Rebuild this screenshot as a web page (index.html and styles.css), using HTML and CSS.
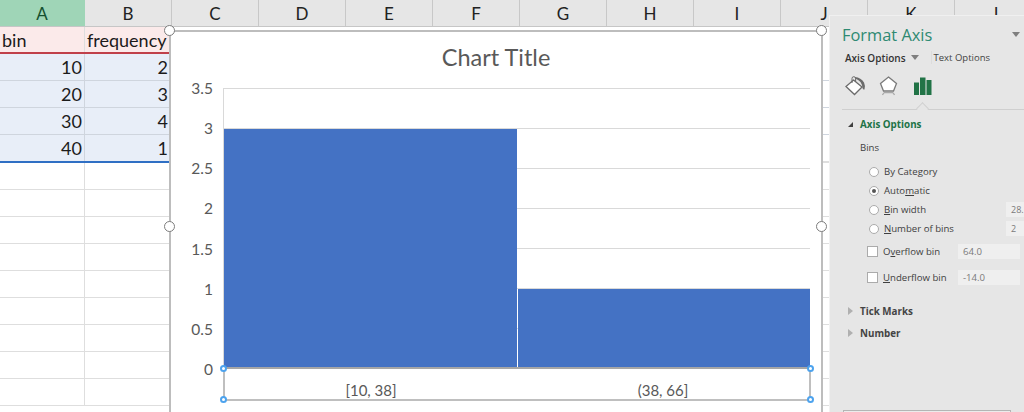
FILE: index.html
```html
<!DOCTYPE html>
<html lang="en">
<head>
<meta charset="utf-8">
<title>Format Axis</title>
<link rel="stylesheet" href="styles.css">
</head>
<body>
<div class="app">
  <div class="sheet">
    <div class="col-heads">
      <div class="ch active">A</div><div class="ch">B</div><div class="ch">C</div><div class="ch">D</div><div class="ch">E</div><div class="ch">F</div><div class="ch">G</div><div class="ch">H</div><div class="ch">I</div><div class="ch">J</div><div class="ch">K</div><div class="ch">L</div>
    </div>
    <div class="row head"><div class="cell">bin</div><div class="cell">frequency</div></div>
    <div class="row data"><div class="cell num">10</div><div class="cell num">2</div></div>
    <div class="row data"><div class="cell num">20</div><div class="cell num">3</div></div>
    <div class="row data"><div class="cell num">30</div><div class="cell num">4</div></div>
    <div class="row data last"><div class="cell num">40</div><div class="cell num">1</div></div>
    <div class="row"><div class="cell"></div><div class="cell"></div></div>
    <div class="row"><div class="cell"></div><div class="cell"></div></div>
    <div class="row"><div class="cell"></div><div class="cell"></div></div>
    <div class="row"><div class="cell"></div><div class="cell"></div></div>
    <div class="row"><div class="cell"></div><div class="cell"></div></div>
    <div class="row"><div class="cell"></div><div class="cell"></div></div>
    <div class="row"><div class="cell"></div><div class="cell"></div></div>
    <div class="row"><div class="cell"></div><div class="cell"></div></div>
    <div class="row"><div class="cell"></div><div class="cell"></div></div>
  </div>

  <div class="chart">
    <span class="handle h-tl"></span><span class="handle h-tr"></span><span class="handle h-ml"></span><span class="handle h-mr"></span>
    <div class="chart-title">Chart Title</div>
    <div class="plot-wrap">
      <div class="y-axis"><span>3.5</span><span>3</span><span>2.5</span><span>2</span><span>1.5</span><span>1</span><span>0.5</span><span>0</span></div>
      <div class="plot">
        <div class="bar bar-a"></div>
        <div class="bar bar-b"></div>
      </div>
    </div>
    <div class="x-axis">
      <span>[10, 38]</span><span>(38, 66]</span>
      <i class="dot d1"></i><i class="dot d2"></i><i class="dot d3"></i><i class="dot d4"></i>
    </div>
  </div>

  <aside class="panel">
    <div class="panel-head"><span class="panel-title">Format Axis</span><span class="caret-down big"></span></div>
    <div class="tabs"><b>Axis Options</b><span class="caret-down"></span><span class="tab-sep"></span><span class="tab-text">Text Options</span></div>
    <div class="icons">
      <svg width="22" height="22" viewBox="0 0 22 22"><path d="M9.500 6 L18 13 L10.500 20.500 L2 12.500 Z" fill="#fff" stroke="#6b6b6b" stroke-width="1.300"/><path d="M8 9 V4.500 a1.800 1.800 0 0 1 3.600 0 V8" fill="none" stroke="#6b6b6b"/><path d="M11 3 q6 0.500 9 5.500 q1.500 3 0.500 7 q-1.500 0.500 -2 -1.500 q0 -3 -2 -6 q-2 -2.500 -5.500 -3.500z" fill="#6b6b6b"/></svg>
      <svg width="22" height="22" viewBox="0 0 22 22"><path d="M11.500 3 L19.500 9.500 L16.500 17 H6.500 L3.500 9.500 Z" fill="#fff" stroke="#7a7a7a" stroke-width="1.300"/><path d="M5.500 21 q1 -2 2 -2.500 h8 q1 0.500 2 2.500" fill="none" stroke="#a8a8a8" stroke-width="1.300"/></svg>
      <svg width="22" height="22" viewBox="0 0 22 22"><path d="M4 8.500h5V21H4zM10 3.500h5.500V21H10zM16.500 6h5v15h-5z" fill="#217346"/></svg>
    </div>
    <div class="tab-rule"><span class="notch"></span></div>
    <div class="section-head open"><span class="tri-open"></span><b>Axis Options</b></div>
    <div class="bins-label">Bins</div>
    <div class="opt"><span class="radio"></span><span>By Category</span></div>
    <div class="opt"><span class="radio on"></span><span>Auto<u>m</u>atic</span></div>
    <div class="opt"><span class="radio"></span><span class="opt-label"><u>B</u>in width</span><span class="field narrow">28.</span></div>
    <div class="opt"><span class="radio"></span><span class="opt-label"><u>N</u>umber of bins</span><span class="field narrow">2</span></div>
    <div class="opt check"><span class="box"></span><span class="opt-label short">O<u>v</u>erflow bin</span><span class="field">64.0</span></div>
    <div class="opt check"><span class="box"></span><span class="opt-label short"><u>U</u>nderflow bin</span><span class="field">-14.0</span></div>
    <div class="section-head closed first"><span class="tri-closed"></span><b>Tick Marks</b></div>
    <div class="section-head closed"><span class="tri-closed"></span><b>Number</b></div>
    <div class="scrollbar"></div>
  </aside>
</div>
</body>
</html>
```
FILE: styles.css
```css
* { box-sizing: border-box; }
html, body { margin: 0; height: 100%; overflow: hidden; background: #fff; }
.app { position: relative; width: 1024px; height: 412px; overflow: hidden; font-family: "Lato", "Open Sans", sans-serif; }

.sheet { display: flex; flex-direction: column; }
.col-heads { display: grid; grid-template-columns: 85px repeat(11, 87px); height: 27px; flex: none; background: #e6e6e6; border-bottom: 1px solid #c6c6c6; }
.ch { display: flex; align-items: center; justify-content: center; font-size: 17px; color: #222; border-right: 1px solid #c8c8c8; }
.ch.active { background: #9fd5b7; color: #14502f; border-right-color: #9fd5b7; }

.row { display: grid; grid-template-columns: 85px 86px; height: 27px; flex: none; width: 1024px; border-bottom: 1px solid #dedede; }
.cell { border-right: 1px solid #dedede; padding: 0 2px; font-size: 18px; line-height: 27px; color: #1b1b1b; white-space: nowrap; overflow: hidden; }
.num { text-align: right; }
.row.head { background: linear-gradient(#fbeaea, #fbeaea) 0 0 / 171px 100% no-repeat; border-bottom: 2px solid #c0504d; border-image: linear-gradient(90deg, #c0404a 171px, transparent 171px) 1; }
.row.data { background: linear-gradient(#e8eef8, #e8eef8) 0 0 / 171px 100% no-repeat; border-bottom-color: #cfd5de; }
.row.data .cell { border-right-color: #cfd5de; }
.row.data.last { height: 28px; border-bottom: 2px solid #2f6fc4; border-image: linear-gradient(90deg, #2f6fc4 171px, #dedede 171px) 1; }

.chart { position: absolute; left: 169px; top: 30px; width: 654px; height: 400px; background: #fff; border: 2px solid #bdbdbd; border-bottom: 0; padding-top: 1px; display: flex; flex-direction: column; }
.handle { position: absolute; width: 11px; height: 11px; border-radius: 50%; background: #fff; border: 1px solid #7d7d7d; }
.h-tl { left: -7px; top: -7px; }
.h-tr { right: -6px; top: -7px; }
.h-ml { left: -7px; top: 189px; }
.h-mr { right: -6px; top: 189px; }
.chart-title { height: 55px; display: flex; align-items: flex-start; justify-content: center; font-size: 23.500px; line-height: 30px; color: #595959; padding-top: 9px; }
.plot-wrap { display: flex; height: 281px; }
.y-axis { width: 52px; display: flex; flex-direction: column; justify-content: space-between; align-items: flex-end; padding-right: 10px; margin-top: -10px; height: 301px; font-size: 15.500px; line-height: 20px; color: #595959; flex: none; }
.plot { width: 587px; height: 281px; display: flex; align-items: flex-end; border-bottom: 2px solid #a6a6a6; border-left: 1px solid #d9d9d9; background: repeating-linear-gradient(#d9d9d9 0 1px, #fff 1px 40px); gap: 1px; }
.bar { flex: 1; background: #4472c4; }
.bar-a { height: 238px; }
.bar-b { height: 78px; }
.x-axis { position: relative; width: 588px; height: 32px; margin-left: 52px; border: 2px solid #bfbfbf; border-top: 0; display: grid; grid-template-columns: 1fr 1fr; align-items: center; justify-items: center; font-size: 15px; color: #595959; padding-top: 11px; line-height: 18px; }
.dot { position: absolute; width: 7px; height: 7px; border-radius: 50%; background: #fff; border: 2px solid #4da3ee; }
.d1 { left: -5px; top: -4px; }
.d2 { right: -5px; top: -4px; }
.d3 { left: -5px; bottom: -4px; }
.d4 { right: -5px; bottom: -4px; }

.panel { position: absolute; left: 829px; top: 15px; width: 195px; height: 397px; background: #e6e6e6; border-left: 1px solid #f2f2f2; border-top: 1px solid #f0f0f0; font-family: "Open Sans", "Noto Sans", sans-serif; font-size: 9.600px; color: #404040; padding-left: 12px; display: flex; flex-direction: column; }
.panel-head { display: flex; align-items: flex-start; justify-content: space-between; height: 33px; padding-top: 7px; }
.panel-title { font-size: 16.400px; line-height: 24px; color: #2e8a72; }
.caret-down { width: 0; height: 0; border-left: 4px solid transparent; border-right: 4px solid transparent; border-top: 5px solid #7f7f7f; display: inline-block; flex: none; }
.caret-down.big { margin: 9px 4px 0 0; }
.tabs { display: flex; align-items: center; gap: 5px; height: 17px; padding-left: 3px; color: #444; font-size: 10px; white-space: nowrap; }
.tabs b { font-weight: 600; color: #333; }
.tab-sep { width: 1px; height: 13px; background: #dcdcdc; margin: 0 -3px 0 7px; }
.tab-text { font-size: 9.500px; }
.icons { display: flex; gap: 11px; padding: 8px 0 0 2px; height: 43px; flex: none; }
.tab-rule { position: relative; width: 182px; height: 1px; background: #cfcfcf; flex: none; }
.notch { position: absolute; left: 76px; top: -5px; width: 9px; height: 9px; background: #e6e6e6; border-left: 1px solid #cfcfcf; border-top: 1px solid #cfcfcf; transform: rotate(45deg); }
.section-head { display: flex; align-items: center; font-size: 9.800px; height: 20px; padding-left: 6px; gap: 7px; color: #444; flex: none; }
.section-head.open { color: #217346; margin-top: 4px; }
.section-head b { font-weight: 700; }
.tri-open { width: 0; height: 0; border-left: 5px solid transparent; border-bottom: 5px solid #404040; }
.tri-closed { width: 0; height: 0; border-top: 4px solid transparent; border-bottom: 4px solid transparent; border-left: 5px solid #b0b0b0; }
.section-head.closed.first { margin-top: 11px; }
.section-head.closed { margin-top: 2px; }
.bins-label { padding: 7px 0 0 18px; height: 28px; flex: none; }
.opt { display: flex; align-items: center; height: 19px; padding-left: 27px; gap: 4px; white-space: nowrap; flex: none; }
.radio { width: 10px; height: 10px; border-radius: 50%; background: #fff; border: 1px solid #ababab; flex: none; position: relative; margin-right: 1px; }
.radio.on::after { content: ""; position: absolute; left: 2px; top: 2px; width: 4px; height: 4px; border-radius: 50%; background: #555; }
.opt-label { width: 118px; flex: none; }
.opt-label.short { width: 70px; }
.field { background: #efefef; height: 15px; line-height: 15px; padding-left: 5px; color: #7a7a7a; width: 62px; flex: none; }
.field.narrow { width: 20px; overflow: hidden; padding-left: 5px; font-size: 9px; }
.opt.check { height: 26px; padding-left: 25px; gap: 5px; }
.box { width: 11px; height: 11px; background: #fff; border: 1px solid #ababab; flex: none; }
.scrollbar { margin: auto 0 0 1px; width: 168px; height: 2px; border: 1px solid #b5b5b5; border-bottom: 0; background: #ececec; flex: none; }
```
